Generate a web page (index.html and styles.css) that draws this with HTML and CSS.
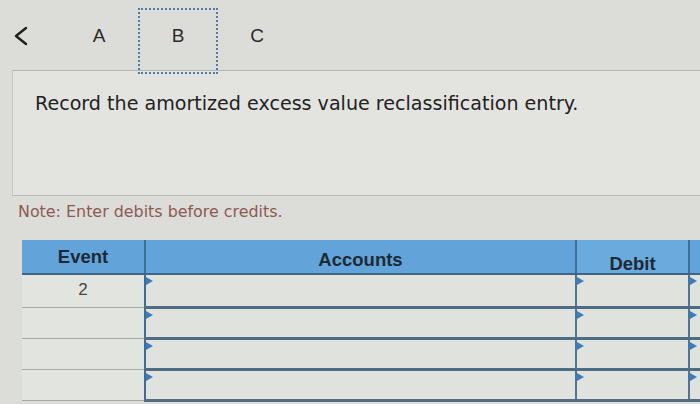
FILE: index.html
```html
<!DOCTYPE html>
<html>
<head>
<meta charset="utf-8">
<link rel="stylesheet" href="styles.css">
</head>
<body>
<div class="page">
  <div class="tabs">
    <span class="back"><svg width="18" height="20" viewBox="0 0 18 20"><path d="M14 2 L4 10 L14 18" fill="none" stroke="#1e1e1e" stroke-width="2.4" stroke-linecap="round" stroke-linejoin="round"/></svg></span>
    <span class="tab">A</span>
    <span class="tab active">B</span>
    <span class="tab">C</span>
  </div>
  <div class="panel">
    <p class="prompt">Record the amortized excess value reclassification entry.</p>
  </div>
  <p class="note">Note: Enter debits before credits.</p>
  <table class="journal">
    <thead>
      <tr>
        <th class="c-event">Event</th>
        <th class="c-acct">Accounts</th>
        <th class="c-debit">Debit</th>
        <th class="c-credit"></th>
      </tr>
    </thead>
    <tbody>
      <tr class="first"><td class="c-event">2</td><td class="inp"><i class="mk"></i></td><td class="inp"><i class="mk"></i></td><td class="inp"><i class="mk"></i></td></tr>
      <tr><td class="c-event"></td><td class="inp"><i class="mk"></i></td><td class="inp"><i class="mk"></i></td><td class="inp"><i class="mk"></i></td></tr>
      <tr><td class="c-event"></td><td class="inp"><i class="mk"></i></td><td class="inp"><i class="mk"></i></td><td class="inp"><i class="mk"></i></td></tr>
      <tr><td class="c-event"></td><td class="inp"><i class="mk"></i></td><td class="inp"><i class="mk"></i></td><td class="inp"><i class="mk"></i></td></tr>
    </tbody>
  </table>
</div>
</body>
</html>
```
FILE: styles.css
```css
html, body {
  margin: 0;
  padding: 0;
}
body {
  background: #dcddd9;
  width: 700px;
  height: 404px;
  overflow: hidden;
  font-family: "DejaVu Sans", Verdana, sans-serif;
  color: #262626;
}
.page {
  width: 700px;
}
.tabs {
  height: 70px;
  display: flex;
  align-items: center;
}
.back {
  width: 60px;
  display: flex;
  padding-left: 12px;
  padding-top: 1px;
  box-sizing: border-box;
}
.tab {
  width: 78px;
  text-align: center;
  font-family: "Liberation Sans", Arial, sans-serif;
  font-size: 19px;
  line-height: 22px;
  color: #2a2a2a;
  box-sizing: border-box;
  margin-top: 1px;
}
.active {
  height: 66px;
  margin-top: 8px;
  padding-top: 15px;
  border: 2px dotted #4f7fa6;
  position: relative;
  z-index: 2;
  align-self: flex-start;
  width: 80px;
}
.panel {
  margin-left: 12px;
  height: 126px;
  border-top: 1px solid #b3b4b0;
  border-left: 1px solid #c6c7c3;
  border-bottom: 1px solid #b8b9b5;
  background: #e3e4e0;
  box-sizing: border-box;
  padding: 21px 0 0 22px;
}
.prompt {
  margin: 0;
  font-size: 19.1px;
  color: #222;
}
.note {
  margin: 6px 0 0 18px;
  font-size: 15.9px;
  line-height: 20px;
  color: #8c5a55;
  height: 38px;
}
.journal {
  margin-left: 22px;
  border-collapse: collapse;
  table-layout: fixed;
  width: 710px;
  font-family: "Liberation Sans", Arial, sans-serif;
}
.journal th {
  box-sizing: border-box;
  background: #62a4d9;
  height: 34px;
  padding: 8px 0 0 0;
  line-height: 18px;
  font-size: 18.5px;
  font-weight: bold;
  color: #1d2a36;
  border-right: 2px solid #3d6e96;
  border-bottom: 2px solid #3f6684;
  vertical-align: top;
}
.journal th.c-acct {
  padding-top: 11px;
}
.journal th.c-debit {
  background: #6aaadd;
  padding-top: 15px;
}
th.c-event { width: 123px; }
th.c-acct { width: 431px; }
th.c-debit { width: 113px; }
.journal td {
  box-sizing: border-box;
  height: 31px;
  padding: 0;
  position: relative;
}
.journal tr.first td {
  height: 33px;
}
td.c-event {
  text-align: center;
  font-size: 17px;
  color: #444;
  border-bottom: 1px solid #a5a8a4;
  border-right: 2px solid #3f6d92;
  background: #e2e4e0;
  vertical-align: top;
  padding-top: 5px;
}
td.inp {
  border-bottom: 3px solid #4e6c82;
  border-right: 2px solid #4e7595;
  background: #e0e2de;
}
.mk {
  position: absolute;
  left: 0;
  top: 2px;
  width: 0;
  height: 0;
  border-top: 4px solid transparent;
  border-bottom: 4px solid transparent;
  border-left: 7px solid #3a7cc0;
}
```
